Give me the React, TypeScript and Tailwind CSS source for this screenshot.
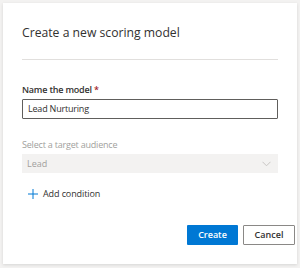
import React from "react";

export default function App() {
  return (
    <div
      className="w-[300px] h-[268px] bg-[#f3f2f1] pt-[3px] pl-[3px]"
      style={{ fontFamily: '"Open Sans", "Noto Sans", sans-serif' }}
    >
      <div className="w-[294px] h-[261px] bg-white shadow-[0_1px_3px_rgba(0,0,0,0.12)] flex flex-col">
        <div className="px-[19px]">
          <div className="h-[57px] flex items-center pt-[4px] border-b border-[#e1dfdd]">
            <h1 className="text-[12.2px] text-[#323130] leading-none">Create a new scoring model</h1>
          </div>
          <div className="mt-[25px] text-[9px] font-semibold text-[#323130] leading-none tracking-[-0.2px]">
            Name the model <span className="text-[#a4262c]">*</span>
          </div>
          <div className="mt-[5px] h-[20px] border border-[#605e5c] rounded-[1px] flex items-center pl-[5px] text-[9px] text-[#323130] tracking-[-0.2px]">
            Lead Nurturing
          </div>
          <div className="mt-[21px] text-[9px] text-[#a19f9d] leading-none tracking-[-0.2px]">Select a target audience</div>
          <div className="mt-[5px] h-[19px] bg-[#f3f2f1] flex items-center justify-between pl-[5px] pr-[7px] text-[9px] text-[#a19f9d]">
            <span>Lead</span>
            <svg width="9" height="6" viewBox="0 0 9 6" fill="none">
              <path d="M0.5 0.8 L4.5 4.8 L8.5 0.8" stroke="#c8c6c4" strokeWidth="1" />
            </svg>
          </div>
          <div className="mt-[14px] flex items-center gap-[5px] pl-[6px] text-[9px] text-[#323130] tracking-[-0.1px]">
            <svg width="10" height="10" viewBox="0 0 10 10" fill="none">
              <path d="M5 0 V10 M0 5 H10" stroke="#0078d4" strokeWidth="1" />
            </svg>
            <span>Add condition</span>
          </div>
        </div>
        <div className="mt-[24px] flex justify-end gap-[5px] pr-[2px]">
          <button className="w-[51px] h-[20px] bg-[#0078d4] text-white text-[9px] font-semibold rounded-[1px]">Create</button>
          <button className="w-[52px] h-[20px] bg-white border border-[#8a8886] text-[#323130] text-[9px] font-semibold rounded-[1px]">Cancel</button>
        </div>
      </div>
    </div>
  );
}
